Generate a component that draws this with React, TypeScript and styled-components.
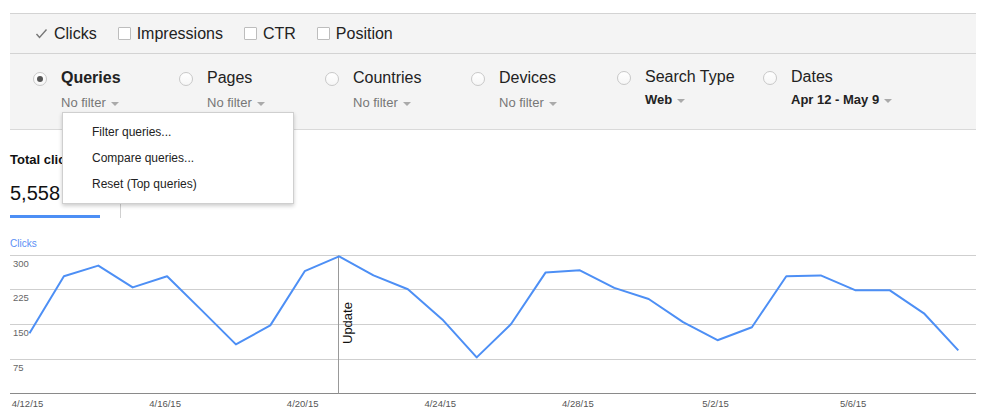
import React from "react"
import styled, { createGlobalStyle } from "styled-components"

const GlobalStyle = createGlobalStyle`
  body {
    margin: 0;
    background: #fff;
    font-family: "Liberation Sans", Arial, sans-serif;
    color: #222;
  }
`

const Page = styled.div`
  width: 966px;
  padding: 13px 14px 0 10px;
`

const Panel = styled.div`
  background: #f4f4f4;
  border-top: 1px solid #d3d3d3;
  border-bottom: 1px solid #d9d9d9;
`

const MetricBar = styled.div`
  height: 39px;
  display: flex;
  align-items: center;
  gap: 21px;
  padding-left: 25px;
  border-bottom: 1px solid #d3d3d3;
`

const Metric = styled.label`
  display: flex;
  align-items: center;
  gap: 6px;
  font-size: 16px;
  color: #222;
`

const Box = styled.span`
  width: 11px;
  height: 11px;
  border: 1px solid #bdbdbd;
  background: #fff;
  border-radius: 1px;
`

const CheckMark = styled.svg`
  width: 13px;
  height: 13px;
  margin-right: 0;
`

const DimensionBar = styled.div`
  height: 75px;
  box-sizing: border-box;
  padding: 15px 0 0 23px;
  display: grid;
  grid-template-columns: repeat(6, 146px);
`

const Dimension = styled.div<{ $raised?: boolean }>`
  position: relative;
  display: flex;
  align-items: flex-start;
  gap: 14px;
  margin-top: ${(p) => (p.$raised ? "-1px" : "0")};
`

const Radio = styled.span<{ $checked?: boolean }>`
  flex: none;
  width: 12px;
  height: 12px;
  margin-top: 3px;
  border-radius: 50%;
  border: 1px solid #c8c8c8;
  background: linear-gradient(#fff, #f6f6f6);
  display: flex;
  align-items: center;
  justify-content: center;
  &::after {
    content: "";
    width: 6px;
    height: 6px;
    border-radius: 50%;
    background: ${(p) => (p.$checked ? "#555" : "transparent")};
  }
`

const DimensionText = styled.div`
  display: flex;
  flex-direction: column;
`

const DimensionTitle = styled.div<{ $bold?: boolean }>`
  font-size: 16px;
  line-height: 18px;
  font-weight: ${(p) => (p.$bold ? "bold" : "normal")};
  color: #222;
`

const FilterValue = styled.div<{ $set?: boolean; $raised?: boolean }>`
  display: flex;
  align-items: center;
  margin-top: ${(p) => (p.$raised ? "6px" : "8px")};
  font-size: 13px;
  line-height: 15px;
  font-weight: ${(p) => (p.$set ? "bold" : "normal")};
  color: ${(p) => (p.$set ? "#222" : "#777")};
  &::after {
    content: "";
    margin-left: 5px;
    margin-top: 2px;
    border-left: 4px solid transparent;
    border-right: 4px solid transparent;
    border-top: 4px solid #aaa;
  }
`

const Menu = styled.ul`
  position: absolute;
  left: 29px;
  top: 43px;
  z-index: 2;
  width: 230px;
  margin: 0;
  padding: 6px 0;
  list-style: none;
  background: #fff;
  border: 1px solid #cfcfcf;
  box-shadow: 0 2px 4px rgba(0, 0, 0, 0.2);
`

const MenuItem = styled.li`
  padding-left: 29px;
  font-size: 12px;
  line-height: 26px;
  color: #222;
  white-space: nowrap;
`

const Summary = styled.div`
  display: flex;
  align-items: flex-end;
  margin-top: 22px;
`

const Scorecard = styled.div`
  width: 90px;
  padding-bottom: 10px;
  border-bottom: 3px solid #4d8ff5;
`

const ScoreTitle = styled.div`
  font-size: 13px;
  line-height: 16px;
  font-weight: bold;
  color: #111;
  white-space: nowrap;
`

const ScoreValue = styled.div`
  margin-top: 13px;
  font-size: 20px;
  line-height: 24px;
  color: #111;
`

const ScoreDivider = styled.div`
  width: 0;
  height: 40px;
  margin-left: 20px;
  border-left: 1px solid #d0d0d0;
`

const SeriesLabel = styled.div`
  margin-top: 20px;
  font-size: 10px;
  line-height: 12px;
  color: #5b8ff5;
`

const Chart = styled.svg`
  display: block;
  width: 966px;
  height: 165px;
  font-family: "Liberation Sans", Arial, sans-serif;
`

const clicks = [
  130, 253, 276, 229, 253, 180, 106, 147, 264, 296, 255, 225, 160, 78, 150, 261,
  266, 228, 204, 154, 115, 143, 253, 255, 223, 223, 173, 93,
]

const AXIS_Y = 143.5
const SCALE = 0.4633
const X0 = 19.5
const STEP = 34.4

const xAt = (i: number) => X0 + i * STEP
const yAt = (v: number) => AXIS_Y - v * SCALE

const ticks = [300, 225, 150, 75]
const dateLabels = ["4/12/15", "4/16/15", "4/20/15", "4/24/15", "4/28/15", "5/2/15", "5/6/15"]
const UPDATE_INDEX = 9

const ClicksChart = () => {
  const line = clicks.map((v, i) => `${xAt(i).toFixed(1)},${yAt(v).toFixed(1)}`).join(" ")
  const updateX = Math.round(xAt(UPDATE_INDEX)) - 0.5
  return (
    <Chart viewBox="0 0 966 165">
      {ticks.map((t) => {
        const y = Math.round(yAt(t)) + 0.5
        return (
          <g key={t}>
            <line x1={0} x2={966} y1={y} y2={y} stroke="#cfcfcf" strokeWidth={1} />
            <text x={3} y={y + 11} fontSize={9.5} fill="#666">
              {t}
            </text>
          </g>
        )
      })}
      <line x1={0} x2={966} y1={AXIS_Y} y2={AXIS_Y} stroke="#8a8a8a" strokeWidth={1} />
      <line
        x1={updateX}
        x2={updateX}
        y1={Math.round(yAt(300)) + 0.5}
        y2={AXIS_Y}
        stroke="#999"
        strokeWidth={1}
      />
      <text transform={`translate(${updateX + 13}, 94) rotate(-90)`} fontSize={13} fill="#111">
        Update
      </text>
      <polyline points={line} fill="none" stroke="#4d8ff5" strokeWidth={2} strokeLinejoin="round" />
      {dateLabels.map((d, k) => (
        <text key={d} x={xAt(k * 4) - 2} y={157} fontSize={9.5} fill="#555" textAnchor="middle">
          {d}
        </text>
      ))}
    </Chart>
  )
}

const dimensions = [
  { name: "Queries", value: "No filter", checked: true },
  { name: "Pages", value: "No filter" },
  { name: "Countries", value: "No filter" },
  { name: "Devices", value: "No filter" },
  { name: "Search Type", value: "Web", set: true },
  { name: "Dates", value: "Apr 12 - May 9", set: true },
]

const App = () => (
  <Page>
    <GlobalStyle />
    <Panel>
      <MetricBar>
        <Metric>
          <CheckMark viewBox="0 0 13 13">
            <polyline points="1.5,7 4.5,10.5 11.5,2.5" fill="none" stroke="#777" strokeWidth={1.4} />
          </CheckMark>
          Clicks
        </Metric>
        <Metric>
          <Box />
          Impressions
        </Metric>
        <Metric>
          <Box />
          CTR
        </Metric>
        <Metric>
          <Box />
          Position
        </Metric>
      </MetricBar>
      <DimensionBar>
        {dimensions.map((d) => (
          <Dimension key={d.name} $raised={d.set}>
            <Radio $checked={d.checked} />
            <DimensionText>
              <DimensionTitle $bold={d.checked}>{d.name}</DimensionTitle>
              <FilterValue $set={d.set} $raised={d.set}>
                {d.value}
              </FilterValue>
            </DimensionText>
            {d.checked && (
              <Menu>
                <MenuItem>Filter queries...</MenuItem>
                <MenuItem>Compare queries...</MenuItem>
                <MenuItem>Reset (Top queries)</MenuItem>
              </Menu>
            )}
          </Dimension>
        ))}
      </DimensionBar>
    </Panel>
    <Summary>
      <Scorecard>
        <ScoreTitle>Total clicks</ScoreTitle>
        <ScoreValue>5,558</ScoreValue>
      </Scorecard>
      <ScoreDivider />
    </Summary>
    <SeriesLabel>Clicks</SeriesLabel>
    <ClicksChart />
  </Page>
)

export default App
